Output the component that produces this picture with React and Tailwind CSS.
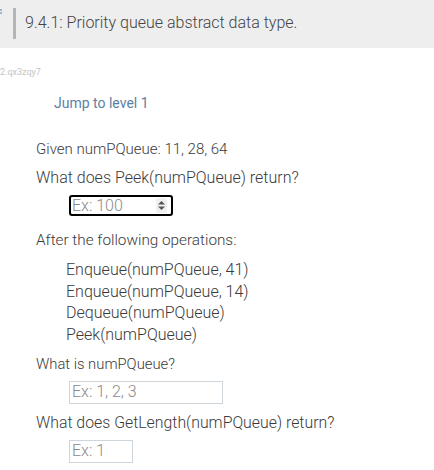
import React from 'react';

const font = { fontFamily: 'Roboto, "Liberation Sans", sans-serif' };

const ops = [
  'Enqueue(numPQueue, 41)',
  'Enqueue(numPQueue, 14)',
  'Dequeue(numPQueue)',
  'Peek(numPQueue)',
];

const App = () => {
  return (
    <div className="w-[434px] h-[470px] bg-white overflow-hidden" style={font}>
      {/* Header */}
      <div className="h-12 bg-[#eeeeee] flex items-center">
        <div className="w-[13px] h-full pt-[9px]">
          <svg width="3" height="6" viewBox="0 0 3 6">
            <rect x="0" y="0" width="2" height="2" fill="#9fb4c8" />
            <rect x="0" y="3" width="2" height="2" fill="#9fb4c8" />
          </svg>
        </div>
        <div className="w-[3px] h-[31px] bg-[#b5b5b5] -mt-[2px]" />
        <h1 className="ml-[9px] text-[16px] font-light text-[#444] leading-[20px] -mt-[2px]">
          9.4.1: Priority queue abstract data type.
        </h1>
      </div>

      <div className="mt-[20px] text-[9px] leading-[9px] text-[#c4c4c4]">2.qx3zqy7</div>

      <div className="mt-[16px] ml-[54px] text-[14px] leading-[20px] text-[#5b7fa3]">Jump to level 1</div>

      <div className="mt-[26px] pl-[36px] text-[#3a3a3a] font-light">
        <p className="text-[15px] leading-[20px]">Given numPQueue: 11, 28, 64</p>
        <p className="mt-[9px] text-[16px] leading-[20px]">What does Peek(numPQueue) return?</p>
        <div className="mt-[7px] ml-[33px] w-[104px] h-[21px] border-2 border-black rounded-[3px] flex items-center justify-between pl-[1px] pr-[4px]">
          <span className="text-[16px] text-[#8a8a8a] leading-none">Ex: 100</span>
          <div className="w-[11px] h-[15px] rounded-[2px] bg-[#f0f0f0] flex items-center justify-center">
            <svg width="9" height="13" viewBox="0 0 9 13">
              <path d="M4.5 2 L8 5.5 L1 5.5 Z" fill="#555" />
              <path d="M4.5 11 L8 7.5 L1 7.5 Z" fill="#555" />
            </svg>
          </div>
        </div>
        <p className="mt-[14px] text-[15.3px] leading-[20px]">After the following operations:</p>
        <div className="mt-[9px] ml-[30px] text-[16px]">
          {ops.map(op => (
            <div key={op} className="leading-[21.7px]">{op}</div>
          ))}
        </div>
        <p className="mt-[8px] text-[14.8px] leading-[20px]">What is numPQueue?</p>
        <div className="mt-[7px] ml-[33px] w-[154px] h-[23px] border border-[#cfd6db] flex items-center pl-[2px]">
          <span className="text-[16px] text-[#8a8a8a] leading-none">Ex: 1, 2, 3</span>
        </div>
        <p className="mt-[9px] text-[15.85px] leading-[20px]">What does GetLength(numPQueue) return?</p>
        <div className="mt-[7px] ml-[33px] w-[64px] h-[23px] border border-[#cfd6db] flex items-center pl-[2px]">
          <span className="text-[16px] text-[#8a8a8a] leading-none">Ex: 1</span>
        </div>
      </div>
    </div>
  );
};

export default App;
